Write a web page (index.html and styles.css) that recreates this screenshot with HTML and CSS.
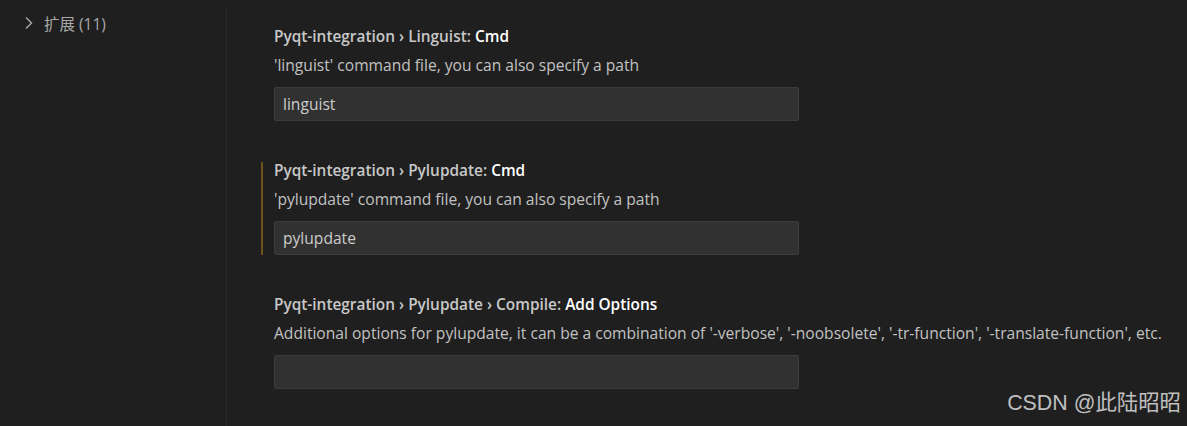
FILE: index.html
```html
<!DOCTYPE html>
<html>
<head>
<meta charset="utf-8">
<link rel="stylesheet" href="styles.css">
</head>
<body>
<div class="editor">
  <nav class="toc">
    <div class="toc-item">
      <svg class="chevron" width="16" height="16" viewBox="0 0 16 16"><path d="M5 2.5 L10.5 8 L5 13.5" fill="none" stroke="currentColor" stroke-width="1.4"/></svg>
      <span class="toc-label">扩展 (11)</span>
    </div>
  </nav>
  <main class="settings">
    <div class="setting">
      <div class="label"><span class="cat">Pyqt-integration › Linguist: </span><span class="key">Cmd</span></div>
      <div class="desc">'linguist' command file, you can also specify a path</div>
      <div class="input">linguist</div>
    </div>
    <div class="setting modified">
      <div class="label"><span class="cat">Pyqt-integration › Pylupdate: </span><span class="key">Cmd</span></div>
      <div class="desc">'pylupdate' command file, you can also specify a path</div>
      <div class="input">pylupdate</div>
    </div>
    <div class="setting">
      <div class="label"><span class="cat">Pyqt-integration › Pylupdate › Compile: </span><span class="key">Add Options</span></div>
      <div class="desc">Additional options for pylupdate, it can be a combination of '-verbose', '-noobsolete', '-tr-function', '-translate-function', etc.</div>
      <div class="input"></div>
    </div>
  </main>
</div>
<div class="watermark">CSDN @此陆昭昭</div>
</body>
</html>
```
FILE: styles.css
```css
html, body {
  margin: 0;
  padding: 0;
  background: #1f1f1f;
  height: 100%;
  overflow: hidden;
}
body {
  font-family: "Open Sans", "Noto Sans CJK SC", sans-serif;
  color: #cccccc;
}
.editor {
  display: flex;
  margin-top: 9px;
  height: calc(100% - 9px);
}
.toc {
  width: 226px;
  border-right: 1px solid #2b2b2b;
  flex-shrink: 0;
}
.toc-item {
  display: flex;
  align-items: center;
  height: 28px;
  padding-left: 21px;
  color: #a8a8a8;
  font-size: 15.5px;
}
.chevron {
  width: 16px;
  height: 16px;
  color: #a8a8a8;
  margin-right: 7px;
}
.settings {
  flex: 1;
  padding-top: 19px;
  padding-left: 34px;
  display: flex;
  flex-direction: column;
  gap: 41px;
}
.setting {
  border-left: 2px solid transparent;
  padding-left: 11px;
  width: 900px;
}
.setting.modified {
  border-left-color: #6e5219;
}
.label {
  font-size: 15.4px;
  font-weight: 600;
  line-height: 18px;
  color: #c8c8c8;
}
.key {
  color: #ffffff;
}
.desc {
  margin-top: 9px;
  font-size: 15.6px;
  line-height: 20px;
  color: #c2c2c2;
  white-space: nowrap;
}
.input {
  margin-top: 12px;
  background: #313131;
  border: 1px solid #3c3c3c;
  border-radius: 2px;
  font-size: 15.6px;
  line-height: 32px;
  padding: 0 8px;
  box-sizing: border-box;
  height: 34px;
  width: 525px;
  color: #cccccc;
}
.watermark {
  position: absolute;
  right: 6px;
  bottom: 10px;
  font-family: "Liberation Sans", "Noto Sans CJK SC", sans-serif;
  font-size: 21.4px;
  color: rgba(255, 255, 255, 0.72);
}
```
